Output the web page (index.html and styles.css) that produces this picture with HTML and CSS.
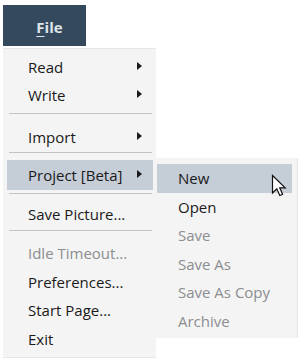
FILE: index.html
```html
<!DOCTYPE html>
<html>
<head>
<meta charset="utf-8">
<link rel="stylesheet" href="styles.css">
</head>
<body>
<div class="screen">
  <div class="menubar">
    <div class="file-tab"><span class="accel">F</span>ile</div>
  </div>
  <div class="menu">
    <div class="item"><span>Read</span><i class="arrow"></i></div>
    <div class="item"><span>Write</span><i class="arrow"></i></div>
    <div class="sep sep-a"></div>
    <div class="item"><span>Import</span><i class="arrow"></i></div>
    <div class="sep sep-b"></div>
    <div class="item item-tall active"><span>Project [Beta]</span><i class="arrow"></i></div>
    <div class="sep sep-c"></div>
    <div class="item"><span>Save Picture...</span></div>
    <div class="sep sep-d"></div>
    <div class="item disabled"><span>Idle Timeout...</span></div>
    <div class="item"><span>Preferences...</span></div>
    <div class="item"><span>Start Page...</span></div>
    <div class="item"><span>Exit</span></div>
  </div>
  <div class="submenu">
    <div class="sub-item active">New</div>
    <div class="sub-item">Open</div>
    <div class="sub-item disabled">Save</div>
    <div class="sub-item disabled">Save As</div>
    <div class="sub-item disabled">Save As Copy</div>
    <div class="sub-item disabled">Archive</div>
  </div>
  <svg class="cursor" width="16" height="24" viewBox="0 0 16 24">
    <path d="M1.5 1.5 L1.5 19 L5.8 14.8 L8.8 21.5 L11.6 20.3 L8.7 13.8 L14.2 13.8 Z" fill="#ffffff" stroke="#111111" stroke-width="1.2" stroke-linejoin="miter"/>
  </svg>
</div>
</body>
</html>
```
FILE: styles.css
```css
html, body {
  margin: 0;
  padding: 0;
  background: #ffffff;
}

.screen {
  position: relative;
  width: 308px;
  height: 364px;
  overflow: hidden;
  padding: 5px 0 0 3px;
  box-sizing: border-box;
  font-family: "Open Sans", "Noto Sans", sans-serif;
  font-size: 15px;
  color: #1a1a1a;
}

.menubar {
  display: flex;
}

.file-tab {
  width: 83px;
  height: 41px;
  background: #34495e;
  color: #dfe4ea;
  font-weight: 700;
  font-size: 15px;
  display: flex;
  align-items: center;
  justify-content: center;
  padding-left: 10px;
  padding-top: 2px;
  box-sizing: border-box;
}

.accel {
  text-decoration: underline;
  text-underline-offset: 3px;
  text-decoration-thickness: 1px;
}

.menu {
  margin-top: 2px;
  width: 153px;
  background: #f4f4f4;
  border-top: 1px solid #e2e7ec;
  padding: 4px 0 4px 0;
  display: flex;
  flex-direction: column;
  box-shadow: 0 1px 0 #e6e6e6;
}

.item {
  height: 28px;
  line-height: 28px;
  margin: 0 3px 0 4px;
  padding: 0 11px 0 21px;
  display: flex;
  align-items: center;
  justify-content: space-between;
  white-space: nowrap;
}

.item-tall {
  height: 30px;
  line-height: 30px;
}

.item.active {
  background: #c5cdd7;
}

.item.tail {
  height: 28.5px;
}

.disabled {
  color: #8b8d90;
}

.arrow {
  width: 0;
  height: 0;
  border-left: 5px solid #1a1a1a;
  border-top: 4px solid transparent;
  border-bottom: 4px solid transparent;
  margin-bottom: 3px;
}

.sep {
  height: 1px;
  background: #c2c2c2;
  margin-left: 6px;
  margin-right: 4px;
}

.sep-a { margin-top: 4px; margin-bottom: 9px; }
.sep-b { margin-top: 1px; margin-bottom: 7px; }
.sep-c { margin-top: 3px; margin-bottom: 6px; }
.sep-d { margin-top: 2px; margin-bottom: 8px; }

.sep-d ~ .item {
  height: 28.5px;
  line-height: 28.5px;
}

.submenu {
  position: absolute;
  left: 156px;
  top: 158px;
  width: 142px;
  height: 180px;
  box-sizing: border-box;
  background: #f4f4f4;
  border-right: 1px solid #e4e4e4;
  padding-top: 6px;
  display: flex;
  flex-direction: column;
}

.sub-item {
  height: 28.5px;
  line-height: 28.5px;
  margin: 0 5px 0 1px;
  padding-left: 21px;
  white-space: nowrap;
}

.sub-item.active {
  background: #c5cdd7;
}

.cursor {
  position: absolute;
  left: 271px;
  top: 174px;
}
```
